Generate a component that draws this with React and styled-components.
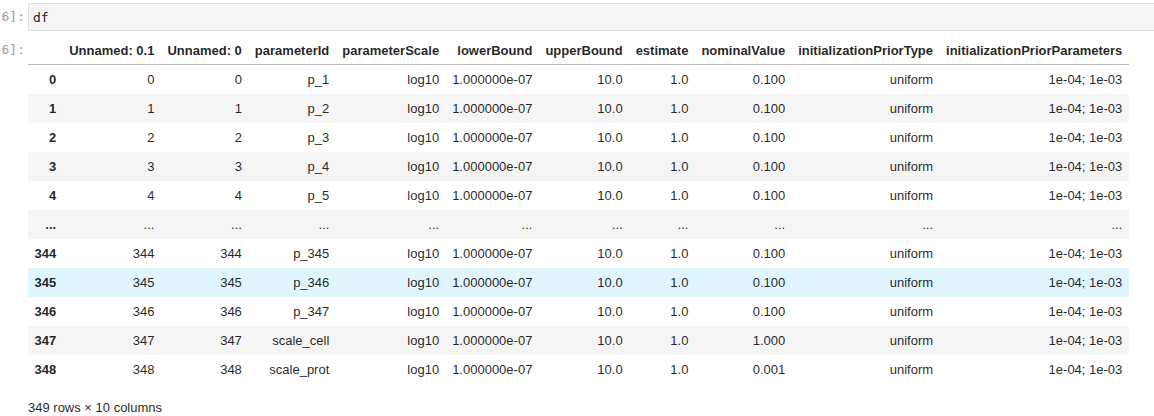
import React from 'react';
import styled, { createGlobalStyle } from 'styled-components';

const GlobalStyle = createGlobalStyle`
    html, body {
        margin: 0;
        padding: 0;
        background: #fff;
        overflow: hidden;
    }
    body {
        font-family: "Liberation Sans", Arial, sans-serif;
    }
`

const Notebook = styled.div`
    padding-top: 3px;
    width: 1180px;
`

const CellRow = styled.div`
    display: flex;
    align-items: flex-start;
    margin-top: ${props => props.$gap || 0}px;
`

const Prompt = styled.div`
    width: 28px;
    flex: 0 0 28px;
    display: flex;
    justify-content: flex-end;
    padding-top: ${props => props.$top || 0}px;
    font-family: "DejaVu Sans Mono", "Liberation Mono", monospace;
    font-size: 13px;
    line-height: 15px;
    color: #9e9e9e;
    white-space: nowrap;
    box-sizing: border-box;
    padding-right: 3px;
`

const InputBox = styled.div`
    flex: 1;
    height: 28px;
    box-sizing: border-box;
    border: 1px solid #e0e0e0;
    background: #f5f5f5;
    display: flex;
    align-items: center;
    padding-left: 4px;
    font-family: "DejaVu Sans Mono", "Liberation Mono", monospace;
    font-size: 13px;
    color: #212121;
`

const Output = styled.div`
    display: flex;
    flex-direction: column;
    align-items: flex-start;
`

const Table = styled.table`
    border-collapse: collapse;
    border-spacing: 0;
    font-size: 13px;
    color: rgba(0, 0, 0, 0.87);
`

const HeadCell = styled.th`
    text-align: right;
    font-weight: bold;
    padding: 7px 6.5px 6px;
    line-height: 15px;
    border-bottom: 1px solid #bdbdbd;
    white-space: nowrap;
`

const Row = styled.tr`
    background: ${props => props.$hover ? '#e1f5fe' : props.$striped ? '#f5f5f5' : '#fff'};
`

const IndexCell = styled.th`
    text-align: right;
    font-weight: bold;
    padding: 7px 6.5px;
    line-height: 15px;
    white-space: nowrap;
`

const Cell = styled.td`
    text-align: right;
    padding: 7px 6.5px;
    line-height: 15px;
    white-space: nowrap;
`

const Footer = styled.div`
    margin-top: 16px;
    font-size: 13px;
    line-height: 15px;
    color: rgba(0, 0, 0, 0.87);
`

const columns = [
    'Unnamed: 0.1', 'Unnamed: 0', 'parameterId', 'parameterScale', 'lowerBound',
    'upperBound', 'estimate', 'nominalValue', 'initializationPriorType', 'initializationPriorParameters'
]

const makeRow = (i, id, nominal = '0.100') => ({
    index: String(i),
    values: [String(i), String(i), id, 'log10', '1.000000e-07', '10.0', '1.0', nominal, 'uniform', '1e-04; 1e-03'],
})

const rows = [
    makeRow(0, 'p_1'),
    makeRow(1, 'p_2'),
    makeRow(2, 'p_3'),
    makeRow(3, 'p_4'),
    makeRow(4, 'p_5'),
    { index: '...', values: Array(10).fill('...') },
    makeRow(344, 'p_345'),
    { ...makeRow(345, 'p_346'), hover: true },
    makeRow(346, 'p_347'),
    makeRow(347, 'scale_cell', '1.000'),
    makeRow(348, 'scale_prot', '0.001'),
]

const App = () => {
    return (
        <>
            <GlobalStyle />
            <Notebook>
                <CellRow>
                    <Prompt $top={6}>6]:</Prompt>
                    <InputBox>df</InputBox>
                </CellRow>
                <CellRow $gap={5}>
                    <Prompt $top={6}>6]:</Prompt>
                    <Output>
                        <Table>
                            <thead>
                                <tr>
                                    <HeadCell />
                                    {columns.map(c => <HeadCell key={c}>{c}</HeadCell>)}
                                </tr>
                            </thead>
                            <tbody>
                                {rows.map((r, i) => (
                                    <Row key={i} $striped={i % 2 === 1} $hover={r.hover}>
                                        <IndexCell>{r.index}</IndexCell>
                                        {r.values.map((v, j) => <Cell key={j}>{v}</Cell>)}
                                    </Row>
                                ))}
                            </tbody>
                        </Table>
                        <Footer>349 rows × 10 columns</Footer>
                    </Output>
                </CellRow>
            </Notebook>
        </>
    )
}

export default App
